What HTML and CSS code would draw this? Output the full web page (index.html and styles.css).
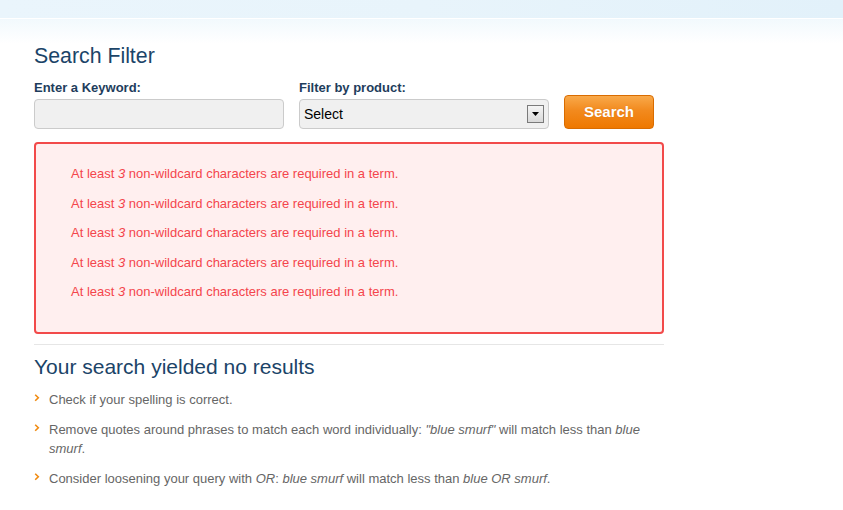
FILE: index.html
```html
<!DOCTYPE html>
<html>
<head>
<meta charset="utf-8">
<link rel="stylesheet" href="styles.css">
</head>
<body>
<div class="band"></div>
<div class="fade"></div>
<main class="page">
  <h1 class="title">Search Filter</h1>
  <form class="filter">
    <div class="field">
      <label class="label">Enter a Keyword:</label>
      <div class="input"></div>
    </div>
    <div class="field">
      <label class="label">Filter by product:</label>
      <div class="input select">
        <span class="select-text">Select</span>
        <span class="drop"><svg width="7" height="4" viewBox="0 0 7 4"><path d="M0 0H7L3.5 4Z" fill="#000"/></svg></span>
      </div>
    </div>
    <button type="button" class="btn">Search</button>
  </form>
  <div class="errors">
    <p class="err">At least <i>3</i> non-wildcard characters are required in a term.</p>
    <p class="err">At least <i>3</i> non-wildcard characters are required in a term.</p>
    <p class="err">At least <i>3</i> non-wildcard characters are required in a term.</p>
    <p class="err">At least <i>3</i> non-wildcard characters are required in a term.</p>
    <p class="err">At least <i>3</i> non-wildcard characters are required in a term.</p>
  </div>
  <hr class="rule">
  <h2 class="title2">Your search yielded no results</h2>
  <ul class="tips">
    <li class="tip"><svg class="chev" width="6" height="8" viewBox="0 0 6 8"><path d="M1.2 0.8L4.3 3.8L1.2 6.8" fill="none" stroke="#f08a10" stroke-width="1.6"/></svg><span class="tip-text">Check if your spelling is correct.</span></li>
    <li class="tip"><svg class="chev" width="6" height="8" viewBox="0 0 6 8"><path d="M1.2 0.8L4.3 3.8L1.2 6.8" fill="none" stroke="#f08a10" stroke-width="1.6"/></svg><span class="tip-text">Remove quotes around phrases to match each word individually: <i>"blue smurf"</i> will match less than <i>blue smurf</i>.</span></li>
    <li class="tip"><svg class="chev" width="6" height="8" viewBox="0 0 6 8"><path d="M1.2 0.8L4.3 3.8L1.2 6.8" fill="none" stroke="#f08a10" stroke-width="1.6"/></svg><span class="tip-text">Consider loosening your query with <i>OR</i>: <i>blue smurf</i> will match less than <i>blue OR smurf</i>.</span></li>
  </ul>
</main>
</body>
</html>
```
FILE: styles.css
```css
html, body {
  margin: 0;
  padding: 0;
  background: #fff;
  font-family: "Liberation Sans", Arial, sans-serif;
}
.band {
  height: 18px;
  background: linear-gradient(90deg, #eaf5fc 0%, #e8f4fb 50%, #e2f1fa 100%);
}
.fade {
  height: 25px;
  margin-top: 1px;
  background: linear-gradient(180deg, #f2f9fd 0%, #ffffff 100%);
}
.page {
  width: 629px;
  padding-left: 34px;
}
.title {
  margin: 0;
  font-size: 21.3px;
  line-height: 24px;
  font-weight: normal;
  color: #1b4468;
}
.filter {
  display: flex;
  align-items: flex-end;
  margin-top: 12px;
}
.field {
  display: flex;
  flex-direction: column;
  margin-right: 15px;
}
.label {
  font-size: 13px;
  line-height: 15px;
  font-weight: bold;
  color: #1e3d5c;
  margin-bottom: 4px;
}
.input {
  box-sizing: border-box;
  width: 250px;
  height: 30px;
  background: #f0f0f0;
  border: 1px solid #cbcbcb;
  border-radius: 4px;
}
.select {
  display: flex;
  align-items: center;
  justify-content: space-between;
  padding: 0 4px 0 4px;
}
.select-text {
  font-size: 14px;
  color: #000;
}
.drop {
  box-sizing: border-box;
  width: 17px;
  height: 18px;
  border: 1px solid #7a7a7a;
  background: linear-gradient(180deg, #f4f4f4 0%, #d9d9d9 100%);
  display: flex;
  align-items: center;
  justify-content: center;
}
.btn {
  box-sizing: border-box;
  width: 90px;
  height: 34px;
  margin: 0;
  padding: 0 0 2px;
  border: 1px solid #d96c00;
  border-radius: 4px;
  background: linear-gradient(180deg, #f9a94a 0%, #f28a1e 45%, #ee7800 100%);
  color: #fff;
  font-family: "Liberation Sans", Arial, sans-serif;
  font-size: 15px;
  font-weight: bold;
  text-shadow: 0 0 1px rgba(180, 80, 0, 0.4);
}
.errors {
  box-sizing: border-box;
  width: 630px;
  margin-top: 13px;
  padding: 15px 20px 25px 35px;
  background: #ffefef;
  border: 2px solid #f24a4a;
  border-radius: 4px;
}
.err {
  margin: 0;
  font-size: 13px;
  line-height: 29.5px;
  color: #f4454c;
}
.err i {
  font-style: italic;
}
.rule {
  width: 630px;
  margin: 10px 0 0;
  border: 0;
  border-top: 1px solid #e6e6e6;
  height: 0;
}
.title2 {
  margin: 10px 0 0;
  font-size: 21px;
  line-height: 24px;
  font-weight: normal;
  color: #1b4468;
}
.tips {
  list-style: none;
  margin: 11px 0 0;
  padding: 0;
  width: 630px;
}
.tip {
  display: flex;
  align-items: flex-start;
  font-size: 13px;
  line-height: 19px;
  color: #666;
  margin-bottom: 11px;
}
.chev {
  flex: none;
  margin: 4px 9px 0 0;
}
```
